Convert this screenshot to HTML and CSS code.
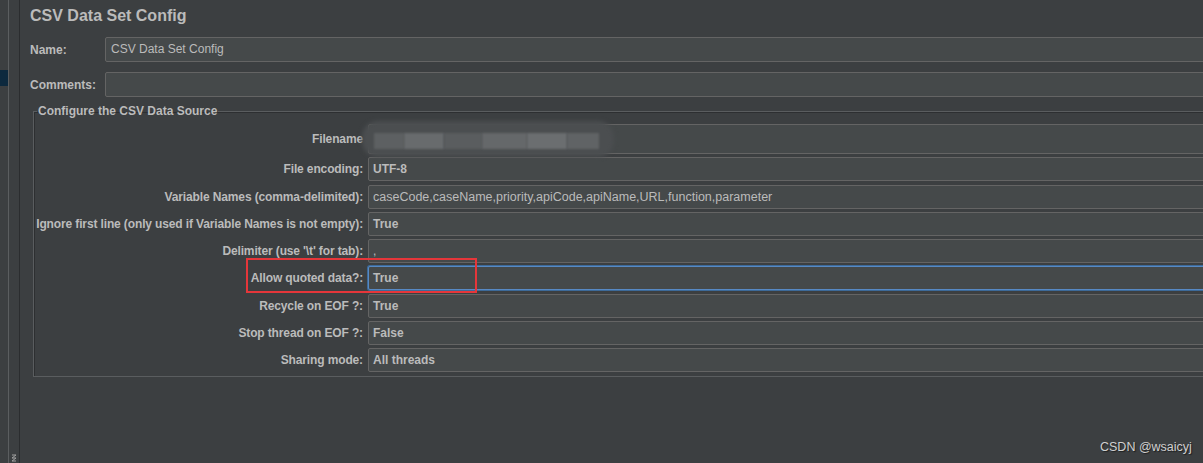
FILE: index.html
```html
<!DOCTYPE html>
<html>
<head>
<meta charset="utf-8">
<link rel="stylesheet" href="styles.css">
</head>
<body>
<div class="app">
  <div class="sidebar"><div class="sel"></div></div>
  <div class="divider">
    <svg class="grip" width="6" height="9" viewBox="0 0 6 9"><path d="M1 1 L5 1 L1 4 L5 4 L1 7 L5 7" fill="none" stroke="#a0a0a0" stroke-width="1"/></svg>
  </div>
  <div class="main">
    <h1 class="title">CSV Data Set Config</h1>
    <div class="row">
      <label class="lbl-top">Name:</label>
      <div class="input top-input">CSV Data Set Config</div>
    </div>
    <div class="row">
      <label class="lbl-top">Comments:</label>
      <div class="input top-input"></div>
    </div>
    <fieldset class="group">
      <legend>Configure the CSV Data Source</legend>
      <div class="grid">
        <label class="lbl">Filename</label>
        <div class="input file-input"></div>
        <label class="lbl">File encoding:</label>
        <div class="input bold">UTF-8</div>
        <label class="lbl">Variable Names (comma-delimited):</label>
        <div class="input wide">caseCode,caseName,priority,apiCode,apiName,URL,function,parameter</div>
        <label class="lbl">Ignore first line (only used if Variable Names is not empty):</label>
        <div class="input bold">True</div>
        <label class="lbl">Delimiter (use '\t' for tab):</label>
        <div class="input">,</div>
        <label class="lbl">Allow quoted data?:</label>
        <div class="input bold focused">True</div>
        <label class="lbl">Recycle on EOF ?:</label>
        <div class="input bold">True</div>
        <label class="lbl">Stop thread on EOF ?:</label>
        <div class="input bold">False</div>
        <label class="lbl">Sharing mode:</label>
        <div class="input bold">All threads</div>
      </div>
    </fieldset>
  </div>
</div>
<div class="blur">
  <div class="cloud"></div>
  <div class="px p1"></div><div class="px p2"></div><div class="px p3"></div><div class="px p4"></div><div class="px p5"></div><div class="px p6"></div>
</div>
<div class="redbox"></div>
<div class="watermark">CSDN @wsaicyj</div>
</body>
</html>
```
FILE: styles.css
```css
html, body {
  margin: 0;
  padding: 0;
}
body {
  width: 1203px;
  height: 463px;
  overflow: hidden;
  background: #3c3f41;
  font-family: "Liberation Sans", Arial, sans-serif;
  color: #bbbbbb;
  position: relative;
}
.app {
  display: flex;
  height: 463px;
}
.sidebar {
  width: 8px;
  flex: none;
  background: #3c3f41;
}
.sel {
  margin-top: 70px;
  height: 16px;
  background: #0d293e;
}
.divider {
  width: 10px;
  flex: none;
  border-left: 1px solid #5b5e60;
  border-right: 1px solid #2b2d2f;
  position: relative;
}
.grip {
  position: absolute;
  left: 2px;
  bottom: 0;
}
.main {
  flex: 1;
  padding-left: 10px;
  overflow: hidden;
}
.title {
  margin: 6px 0 0 0;
  font-size: 16px;
  font-weight: bold;
  line-height: 20px;
  height: 20px;
}
.row {
  display: flex;
  align-items: center;
  margin-right: -4px;
  height: 25px;
  margin-top: 11px;
}
.row + .row {
  margin-top: 10px;
}
.lbl-top {
  width: 75px;
  flex: none;
  font-size: 12px;
  font-weight: bold;
}
.input {
  box-sizing: border-box;
  height: 100%;
  background: #45494a;
  border: 1px solid #646464;
  border-radius: 2px;
  font-size: 12px;
  line-height: 22px;
  padding-left: 4px;
  white-space: nowrap;
  overflow: hidden;
}
.wide {
  font-size: 12.5px;
}
.top-input {
  flex: 1;
  height: 25px;
  padding-left: 5px;
}
.bold {
  font-weight: bold;
}
.group {
  margin: 7px -4px 0 3px;
  padding: 6px 0 4px 0;
  border: 1px solid #5a5d5f;
  box-shadow: inset 1px 1px 0 #2d2f31;
  border-radius: 0;
  box-sizing: border-box;
}
.group legend {
  font-size: 12px;
  font-weight: bold;
  padding: 0 1px;
  margin-left: 3px;
  line-height: 14px;
}
.grid {
  display: grid;
  grid-template-columns: 332px 1fr;
  column-gap: 2px;
  grid-template-rows: 30px repeat(8, 24px);
  row-gap: 3.25px;
}
.lbl {
  font-size: 12px;
  font-weight: bold;
  letter-spacing: -0.13px;
  text-align: right;
  align-self: center;
  white-space: nowrap;
  padding-right: 3px;
}
.focused {
  border: 1px solid #5789c4;
  box-shadow: 0 0 0 1px #3d6a99;
}
.blur {
  position: absolute;
  left: 362px;
  top: 121px;
  width: 252px;
  height: 36px;
}
.cloud {
  position: absolute;
  inset: 0;
  background: #4b4e50;
  border-radius: 16px;
  filter: blur(2px);
}
.px {
  position: absolute;
  top: 12px;
  height: 16px;
  filter: blur(1px);
}
.p1 { left: 12px; width: 30px; background: #5d6062; }
.p2 { left: 42px; width: 40px; background: #686b6d; }
.p3 { left: 82px; width: 38px; background: #5a5d5f; }
.p4 { left: 120px; width: 45px; background: #65686a; }
.p5 { left: 165px; width: 40px; background: #6b6e70; }
.p6 { left: 205px; width: 32px; background: #606365; }
.redbox {
  position: absolute;
  left: 246px;
  top: 258px;
  width: 231px;
  height: 35px;
  box-sizing: border-box;
  border: 2px solid #e5363a;
}
.watermark {
  position: absolute;
  left: 1100px;
  top: 440px;
  font-size: 12.5px;
  color: #d0d0d0;
  text-shadow: 1px 1px 1px #1e1f20;
}
```
